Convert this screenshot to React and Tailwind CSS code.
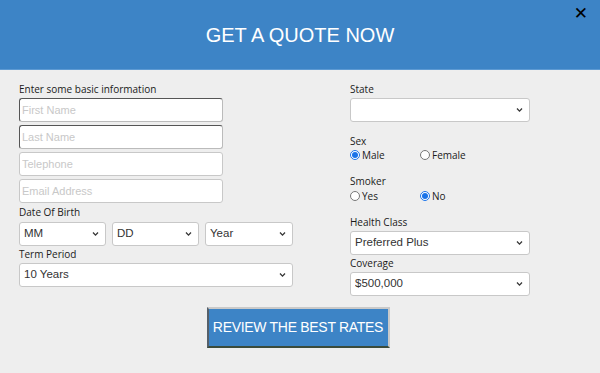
import React, { useState } from "react";

const labelFont = { fontFamily: "'Open Sans', Lato, sans-serif" };

const Chevron = () => (
  <svg
    className="pointer-events-none absolute right-[7px] top-1/2 -translate-y-1/2"
    width="7"
    height="5"
    viewBox="0 0 7 5"
  >
    <path d="M1 1 L3.5 3.6 L6 1" fill="none" stroke="#333" strokeWidth="1.3" />
  </svg>
);

const Select = ({ value, options, className = "" }) => (
  <div className={`relative ${className}`}>
    <select
      defaultValue={value}
      className="block h-[24px] w-full appearance-none rounded-[3px] border border-[#c8c8c8] bg-white pl-[4px] pr-5 text-[11.5px] text-[#333] outline-none font-['Liberation_Sans',Arial,sans-serif]"
    >
      {options.map((o) => (
        <option key={o}>{o}</option>
      ))}
    </select>
    <Chevron />
  </div>
);

const Label = ({ children, className = "" }) => (
  <div className={`h-[12px] text-[10px] leading-[12px] text-[#1a1a1a] ${className}`} style={labelFont}>
    {children}
  </div>
);

const TextInput = ({ placeholder, dark }) => (
  <input
    type="text"
    placeholder={placeholder}
    className={`block h-[24px] w-[204px] rounded-[3px] bg-white px-[2px] text-[11px] text-[#333] placeholder-[#c8c8c8] outline-none font-['Liberation_Sans',Arial,sans-serif] ${
      dark ? "border border-[#555] border-b-[#bbb] border-r-[#bbb]" : "border border-[#c8c8c8]"
    }`}
  />
);

const Radio = ({ name, label, checked, onChange }) => (
  <label className="flex h-[12px] items-center gap-[2px] text-[10px] leading-[12px] text-[#1a1a1a]" style={labelFont}>
    <input
      type="radio"
      name={name}
      checked={checked}
      onChange={onChange}
      className="m-0 h-[10px] w-[10px] accent-[#1a73e8]"
    />
    <span>{label}</span>
  </label>
);

export default function App() {
  const [sex, setSex] = useState("male");
  const [smoker, setSmoker] = useState("no");

  return (
    <div className="h-[373px] w-[600px] overflow-hidden bg-[#eeeeee]">
      {/* Header */}
      <div className="relative flex h-[70px] items-center justify-center border-b border-[#5d9ad3] bg-[#3d84c6]">
        <h1 className="text-[20px] text-white font-['Liberation_Sans',Arial,sans-serif]">
          GET A QUOTE NOW
        </h1>
        <button className="absolute right-[12px] top-[5px] text-[17px] font-bold leading-none text-black font-['DejaVu_Sans',sans-serif]">
          ✕
        </button>
      </div>

      {/* Form */}
      <div className="flex gap-[57px] pl-[19px] pt-[13px]">
        {/* Left column */}
        <div className="flex w-[274px] flex-col">
          <Label>Enter some basic information</Label>
          <div className="mt-[3px] flex flex-col gap-[3px]">
            <TextInput placeholder="First Name" dark />
            <TextInput placeholder="Last Name" dark />
            <TextInput placeholder="Telephone" />
            <TextInput placeholder="Email Address" />
          </div>
          <Label className="mt-[3px]">Date Of Birth</Label>
          <div className="mt-[4px] flex gap-[6px]">
            <Select value="MM" options={["MM"]} className="w-[87px]" />
            <Select value="DD" options={["DD"]} className="w-[87px]" />
            <Select value="Year" options={["Year"]} className="w-[88px]" />
          </div>
          <Label className="mt-[2px]">Term Period</Label>
          <Select value="10 Years" options={["10 Years", "15 Years", "20 Years", "30 Years"]} className="mt-[3px] w-[274px]" />
        </div>

        {/* Right column */}
        <div className="flex w-[180px] flex-col">
          <Label>State</Label>
          <Select value="" options={[""]} className="mt-[3px]" />
          <Label className="mt-[13px]">Sex</Label>
          <div className="mt-[2px] flex">
            <div className="w-[70px]">
              <Radio name="sex" label="Male" checked={sex === "male"} onChange={() => setSex("male")} />
            </div>
            <Radio name="sex" label="Female" checked={sex === "female"} onChange={() => setSex("female")} />
          </div>
          <Label className="mt-[14px]">Smoker</Label>
          <div className="mt-[3px] flex">
            <div className="w-[70px]">
              <Radio name="smoker" label="Yes" checked={smoker === "yes"} onChange={() => setSmoker("yes")} />
            </div>
            <Radio name="smoker" label="No" checked={smoker === "no"} onChange={() => setSmoker("no")} />
          </div>
          <Label className="mt-[14px]">Health Class</Label>
          <Select value="Preferred Plus" options={["Preferred Plus", "Preferred", "Standard Plus", "Standard"]} className="mt-[3px]" />
          <Label className="mt-[2px]">Coverage</Label>
          <Select value="$500,000" options={["$250,000", "$500,000", "$750,000", "$1,000,000"]} className="mt-[3px]" />
        </div>
      </div>

      <div className="mt-[11px] flex justify-center pr-[4px]">
        <button className="h-[41px] w-[183px] whitespace-nowrap border-2 border-[#c9c9c9] border-b-[#3b4b3b] border-l-[#56606a] bg-[#3d84c6] text-[14px] tracking-[-0.3px] text-white font-['Liberation_Sans',Arial,sans-serif]">
          REVIEW THE BEST RATES
        </button>
      </div>
    </div>
  );
}
